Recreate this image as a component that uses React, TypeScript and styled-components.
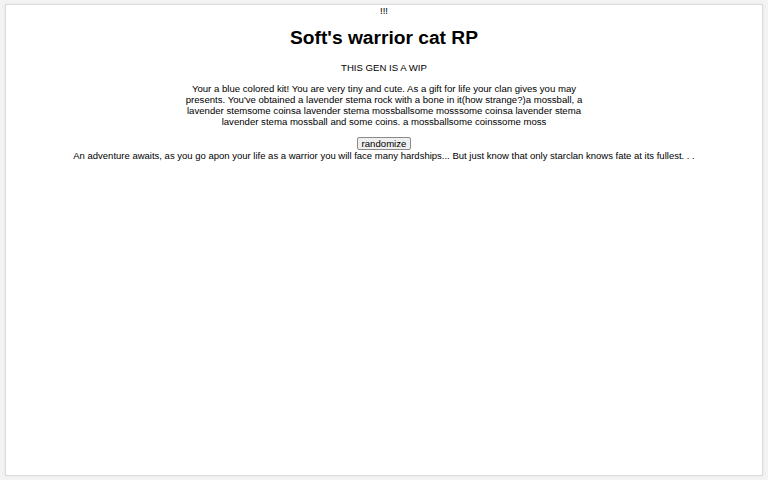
import React, { useState } from 'react';
import styled, { createGlobalStyle } from 'styled-components';

const GlobalStyle = createGlobalStyle`
  html, body {
    margin: 0;
    padding: 0;
    background-color: #f3f3f3;
  }
  body {
    font-family: 'Liberation Sans', Arial, sans-serif;
    color: #000;
  }
`;

const kitStory =
  "Your a blue colored kit! You are very tiny and cute. As a gift for life your clan gives you may presents. You've obtained a lavender stema rock with a bone in it(how strange?)a mossball, a lavender stemsome coinsa lavender stema mossballsome mosssome coinsa lavender stema lavender stema mossball and some coins. a mossballsome coinssome moss";

export default function App() {
  const [story, setStory] = useState<string>(kitStory);

  const handleRandomize = () => {
    setStory(kitStory);
  };

  return (
    <>
      <GlobalStyle />
      <Page>
        <Card>
          <Exclaim>!!!</Exclaim>
          <Title>Soft's warrior cat RP</Title>
          <Notice>THIS GEN IS A WIP</Notice>
          <Story>{story}</Story>
          <RandomButton onClick={handleRandomize}>randomize</RandomButton>
          <Adventure>
            An adventure awaits, as you go apon your life as a warrior you will face many hardships... But just know that
            only starclan knows fate at its fullest. . .
          </Adventure>
        </Card>
      </Page>
    </>
  );
}

const Page = styled.main`
  box-sizing: border-box;
  height: 480px;
  padding: 4px 5px 4px 5px;
`;

const Card = styled.section`
  box-sizing: border-box;
  display: flex;
  flex-direction: column;
  align-items: center;

  height: 100%;

  background-color: #fff;
  border: 1px solid #dcdcdc;
  box-shadow: 0 0 2px rgba(0, 0, 0, 0.08);

  text-align: center;
`;

const Exclaim = styled.p`
  margin: 0;
  font-size: 9.6px;
  line-height: 11px;
`;

const Title = styled.h1`
  margin: 11px 0 0;
  font-size: 19.2px;
  font-weight: 700;
  line-height: 22px;
`;

const Notice = styled.p`
  margin: 13px 0 0;
  font-size: 9.6px;
  line-height: 11px;
`;

const Story = styled.p`
  width: 400px;
  margin: 10px 0 0;
  font-size: 9.6px;
  line-height: 11px;
`;

const RandomButton = styled.button`
  margin-top: 10px;
  padding: 0 4px;

  font-family: 'Liberation Sans', Arial, sans-serif;
  font-size: 9.6px;
  line-height: 11px;
  color: #000;

  background-color: #efefef;
  border: 1px solid #8a8a8a;
  border-radius: 2px;
`;

const Adventure = styled.p`
  margin: 0;
  font-size: 9.5px;
  line-height: 11px;
`;
